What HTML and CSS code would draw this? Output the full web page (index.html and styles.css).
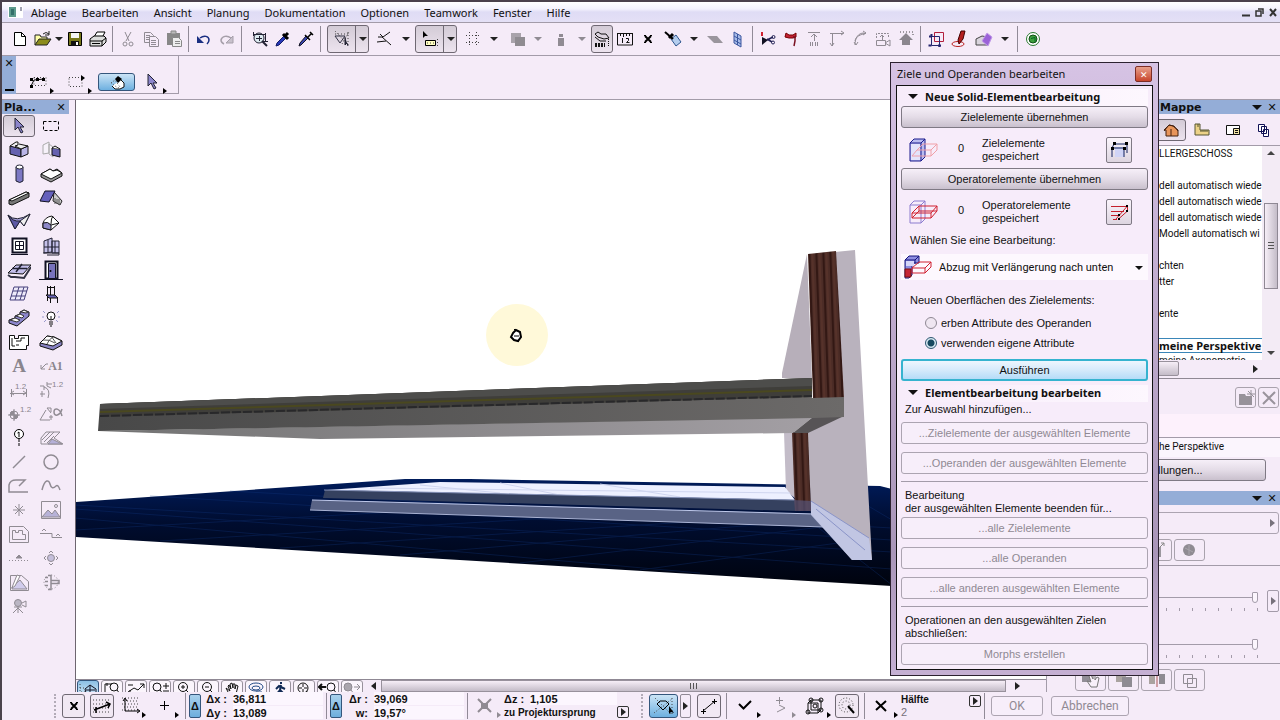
FILE: index.html
```html
<!DOCTYPE html>
<html lang="de">
<head>
  <meta charset="utf-8">
  <title>Ziele und Operanden bearbeiten</title>
  <link rel="stylesheet" href="styles.css">
</head>
<body>
  <nav class="menubar">
    <svg class="app-icon" width="16" height="12"><path d="M0 0h15v12H0z" fill="#fff"/><path d="M1 1h7v10H1z" fill="#5d9a8c"/><path d="M3 3h3v6H3z" fill="#33706a"/><path d="M13 1v4" stroke="#446"/></svg>
    <a href="#">Ablage</a>
    <a href="#">Bearbeiten</a>
    <a href="#">Ansicht</a>
    <a href="#">Planung</a>
    <a href="#">Dokumentation</a>
    <a href="#">Optionen</a>
    <a href="#">Teamwork</a>
    <a href="#">Fenster</a>
    <a href="#">Hilfe</a>
    <svg class="window-buttons" width="38" height="12"><path d="M2 9.500h8" stroke="#333" stroke-width="2"/><path d="M16 5h5v5h-5zM18 3h5v5" fill="none" stroke="#333" stroke-width="1.500"/><path d="M30 3l6 7M36 3l-6 7" stroke="#333" stroke-width="2"/></svg>
  </nav>

  <div class="toolbar">
    <button class="tool"><svg width="20" height="20"><path d="M4.500 3.500h7l4 4v9h-11z" fill="#fff" stroke="#000"/><path d="M11.500 3.500v4h4" fill="none" stroke="#000"/></svg></button>
    <button class="tool"><svg width="20" height="20"><path d="M2 16V6h5l1 2h6v3" fill="#ffffa8" stroke="#222"/><path d="M2 16l4-6h12l-4 6z" fill="#8c8c1c" stroke="#222"/><path d="M10 5q3-3 6 0M16 2v4h-4" fill="none" stroke="#222"/></svg></button>
    <button class="drop"></button>
    <button class="tool"><svg width="20" height="20"><path d="M3.500 3.500h13v13h-13z" fill="#77771a" stroke="#000"/><path d="M6 4h8v5H6z" fill="#f5f5f5"/><path d="M6 12h8v5H6z" fill="#111"/><path d="M11 13h2v3h-2z" fill="#fff"/></svg></button>
    <button class="tool"><svg width="20" height="20"><path d="M6 8l3-5h8l-3 6" fill="#fff" stroke="#000"/><path d="M2 10l4-3h10l2 2v4l-4 4H2z" fill="#ddd" stroke="#000"/><path d="M2 12h12l4-3M14 12v5M4 14.500h8" fill="none" stroke="#000"/></svg></button>
    <span class="sep"></span>
    <button class="tool"><svg width="20" height="20" class="gray"><path d="M7 3l4 9M13 3L8 12"/><circle cx="7" cy="15" r="2"/><circle cx="13" cy="15" r="2"/></svg></button>
    <button class="tool"><svg width="20" height="20" class="gray"><path d="M3.500 3.500h6l3 3v7h-9zM5 6.500h4M5 8.500h5M5 10.500h5"/><path d="M8.500 7.500h6l3 3v7h-9z" fill="#f5ebf8"/><path d="M10 11.500h5M10 13.500h5M10 15.500h5"/></svg></button>
    <button class="tool"><svg width="20" height="20"><path d="M3 4h13v12H3z" fill="#888"/><path d="M7 2h5v3H7z" fill="#bbb" stroke="#888"/><path d="M8.500 8.500h6l3 3v6h-9z" fill="#eee" stroke="#888"/><path d="M11 12.500h5M11 14.500h5" stroke="#888"/></svg></button>
    <span class="sep"></span>
    <button class="tool"><svg width="20" height="20"><path d="M6 9c4-3 9-2 9 2 0 1-1 3-2 4" fill="none" stroke="#1a2f82" stroke-width="1.500"/><path d="M3 7v7h7z" fill="#1a2f82"/></svg></button>
    <button class="tool"><svg width="20" height="20"><path d="M14 9C10 6 5 7 4 11c0 1 1 3 3 4" fill="none" stroke="#a69faa" stroke-width="1.500"/><path d="M16 7v7H9z" fill="#c8c1cc" stroke="#a69faa"/></svg></button>
    <span class="sep sep-wide"></span>
    <button class="tool"><svg width="20" height="20"><circle cx="9" cy="9" r="5" fill="#dceaf0" stroke="#223"/><path d="M12 12l5 5" stroke="#223" stroke-width="2"/><path d="M3 5.500h13M3.500 3v4M15.500 4v8M13 12.500h5M6 9.500h6M9.500 7v5" stroke="#223"/></svg></button>
    <button class="tool"><svg width="20" height="20"><path d="M3 17l1-3 7-7 2 2-7 7z" fill="#2838b8" stroke="#111b66"/><path d="M10 5l5 5M12 7l3-3" stroke="#000" stroke-width="3"/></svg></button>
    <button class="tool"><svg width="20" height="20"><path d="M3 17l2-1 7-7-2-2-6 7z" fill="#3a46b0" stroke="#112"/><path d="M9 6l5 5M12 8l3-3M14 3l3 3" stroke="#000" stroke-width="1.500"/></svg></button>
    <span class="sep sep-wide"></span>

    <span class="pair pressed">
      <button><svg width="20" height="20"><path d="M3 5h14M3 2l14 15M10 15l7-12M16 3v13" class="dots"/><path d="M3 7h10l-5 7z" fill="none" stroke="#334"/><path d="M13 8v8l2-2 1 3" fill="#223" stroke="#223"/></svg></button>
      <button class="drop"></button>
    </span>
    <span class="pair">
      <button><svg width="20" height="20" class="line"><path d="M3 8h4l9 8M5 5l3 3 7-5M2 13l9-1"/></svg></button>
      <button class="drop"></button>
    </span>
    <span class="pair pressed">
      <button><svg width="20" height="20"><path d="M3 2v7l2-2h3z"/><path d="M5.500 11.500h10v5h-10z" fill="#ffffc0" stroke="#000"/><path d="M7 14h7" class="dots"/><path d="M17.500 10v8" class="dots"/></svg></button>
      <button class="drop"></button>
    </span>
    <span class="pair">
      <button><svg width="20" height="20"><path d="M3 6.500h14M3 13.500h14M6.500 3v14M13.500 3v14" class="dots"/></svg></button>
      <button class="drop"></button>
    </span>
    <span class="pair muted">
      <button><svg width="20" height="20"><path d="M4 4h10v10H4z" fill="#a9a3ab"/><path d="M8 8h10v9H8z" fill="#8f8b91"/></svg></button>
      <button class="drop"></button>
    </span>
    <span class="pair muted">
      <button><svg width="20" height="20"><path d="M8 5h4v3h-4zM7 9h6v8H7z" fill="#908b93"/></svg></button>
      <button class="drop"></button>
    </span>
    <button class="tool pressed narrow"><svg width="20" height="20" class="line"><path d="M3 5l3-2 3 2h5l3 4-5 1-6-2zM3 8l5 4h6"/><path d="M3 15h10M3 17h10" stroke-width="2" stroke-dasharray="2 1"/><path d="M16.500 10v8" stroke-dasharray="1 1"/></svg></button>
    <button class="tool"><svg width="20" height="20" class="line"><path d="M2 4.500h16M2.500 4v12h15V4M5.500 5v2M8.500 5v3M11.500 5v2M14.500 5v2M7.500 9v5M11 9.500h2.500v2l-2 2h3"/></svg></button>
    <button class="tool"><svg width="20" height="20"><path d="M7 7l6 6M13 7l-6 6" stroke="#000" stroke-width="2"/><path d="M6 6.500h2M12 6.500h2M6 13.500h2M12 13.500h2" stroke="#000"/></svg></button>
    <span class="pair">
      <button><svg width="20" height="20"><path d="M8 10l5-4 5 7-5 4z" fill="#b4cdee" stroke="#2d558e"/><path d="M2 3l8 7" stroke="#000" stroke-width="2"/><path d="M6 9l4-4" stroke="#000" stroke-width="3"/></svg></button>
      <button class="drop"></button>
    </span>
    <button class="tool"><svg width="20" height="20"><path d="M2 7h10l6 7H9z" fill="#9a959d"/></svg></button>
    <button class="tool"><svg width="20" height="20"><path d="M6 3l7 4v11l-7-4z" fill="#a8bce8" stroke="#3c57a0"/><path d="M6 7l7 4M6 11l7 4M9.500 5v11" stroke="#3c57a0"/></svg></button>
    <span class="sep"></span>
    <button class="tool"><svg width="20" height="20"><path d="M4 3v4" stroke="#d02030" stroke-width="2"/><path d="M4 8v8l6-5z" fill="#112"/><path d="M9 11l6-3M9 10l5 3" stroke="#225" stroke-width="1.500"/><circle cx="15.500" cy="8" r="1.500" fill="none" stroke="#225"/><circle cx="15" cy="13.500" r="1.500" fill="none" stroke="#225"/></svg></button>
    <button class="tool"><svg width="20" height="20"><path d="M4 8l1-4 3 2h4l3-2v4l-3 1H8z" fill="#c32235" stroke="#700"/><path d="M12 8h2v4l-1 5" fill="none" stroke="#7a1020" stroke-width="1.500"/></svg></button>
    <button class="tool"><svg width="20" height="20" class="gray"><path d="M4 3.500h12M10.500 5v7M7 8l3-3 3 3M6.500 13v4M8.500 13v4M11.500 13v4M13.500 13v4"/></svg></button>
    <button class="tool"><svg width="20" height="20" class="gray"><path d="M3 4.500h13M5.500 17V4M14 2l3 2-3 2M3 14l2 3 2-3"/></svg></button>
    <button class="tool"><svg width="20" height="20" class="gray"><path d="M5 16C5 9 8 4 14 4M4 13l2 3 2-3M13 2l3 2-3 2M5 12C6 7 10 6 16 4"/></svg></button>
    <button class="tool"><svg width="20" height="20" class="gray"><path d="M3.500 11.500h9v5h-9zM12 14l5-3v6z"/><path d="M3.500 9V4.500h12V9" stroke-dasharray="2 1"/><path d="M9.500 11V6M7 8l2-2 2 2"/></svg></button>
    <button class="tool"><svg width="20" height="20"><path d="M4 3h13v4" class="dots"/><path d="M10 4l7 7h-3v5H6v-5H3z" fill="#8b868e"/></svg></button>
    <span class="sep"></span>
    <button class="tool"><svg width="20" height="20" fill="none"><path d="M8.500 3.500h9v9h-9z" stroke="#b31f3c"/><path d="M5.500 7.500h8v9h-8z" stroke="#26266e"/><path d="M3 7.500h3M5.500 5v3M12 16.500h3M5.500 16.500h-3M13.500 16v2" stroke="#26266e" stroke-width="2"/></svg></button>
    <button class="tool"><svg width="20" height="20"><ellipse cx="9" cy="15" rx="6" ry="2.500" fill="none" stroke="#b22"/><path d="M12 2h4l-2 8-4 5-1-4z" fill="#b31f1f" stroke="#400"/></svg></button>
    <span class="pair">
      <button><svg width="20" height="20"><path d="M2 16v-6l6-3 6 1v8z" fill="#d9d4dd" stroke="#444"/><path d="M8 12l5-8 5 4-4 9z" fill="#9b62d8" stroke="#c19be8"/></svg></button>
      <button class="drop"></button>
    </span>
    <span class="sep"></span>
    <button class="tool"><svg width="20" height="20"><circle cx="10" cy="10" r="6.500" fill="#fff" stroke="#2a7a30"/><circle cx="10" cy="10" r="4" fill="#3e9f3e" stroke="#114d16"/><path d="M8 9.500l4-1v4" fill="none" stroke="#062"/></svg></button>
  </div>

  <div class="infobar">
    <div class="grip-box"><button class="close">✕</button><i></i></div>
    <div class="info-tools">
      <button class="flyout"><svg width="22" height="16"><path d="M6 3.500h12v8H6z" class="dots"/><path d="M3 12l3-6 10-1" fill="none" stroke="#000"/><path d="M2 4h3v3H2zM14 4h3v3h-3zM2 11h3v3H2zM8 4h3v3H8z"/></svg></button>
      <button class="flyout"><svg width="22" height="16"><path d="M3 3.500h13v9H3z" class="dots"/><path d="M15 1l4 3-4 3z"/></svg></button>
      <button class="blue-btn"><svg width="20" height="16"><path d="M14 6l3 3v4l-4 2H8l-3-3" fill="#fff" stroke="#111"/><path d="M11 2l4 3-4 4-3-4z"/><path d="M4 9l4-3 5 7-2 1z" class="dots"/></svg></button>
      <button class="flyout"><svg width="22" height="20"><path d="M7 2v12l3-3 3 6 2-1-3-5h4z" fill="#8c86cc" stroke="#223"/></svg></button>
    </div>
  </div>

  <div class="workspace">
    <aside class="palette">
      <div class="panel-title"><b>Pla...</b><button class="close">✕</button></div>
      <div class="palette-grid">
        <button class="pressed"><svg width="24" height="20"><path d="M8 2v12l3-3 3 6 2-1-3-5h4z" fill="#8c86cc" stroke="#223"/></svg></button>
        <button><svg width="24" height="20"><path d="M4.500 5.500h15v9h-15z" fill="none" stroke="#000" stroke-dasharray="3 2"/></svg></button>
        <button><svg width="24" height="20"><path d="M3 6l11 3v8L3 14z" fill="#6662b0" stroke="#111"/><path d="M14 9l7-3v8l-7 3z" fill="#b9b4e6" stroke="#111"/><path d="M3 6l6-4h2v3l-3 1 6 3 7-3-9-2" fill="#eee" stroke="#111"/></svg></button>
        <button><svg width="24" height="20"><path d="M4 5l6-3v11l-6 1zM10 4l4 3v10l-4-3z" fill="#f7f2fa" stroke="#aaa"/><path d="M13 8l8 1v8l-8-2z" fill="#6662b0" stroke="#111"/><path d="M13 8l3-2 5 3" fill="#eee" stroke="#111"/></svg></button>
        <button><svg width="24" height="20"><path d="M9 3v14q4 3 7 0V3" fill="#7d78c4" stroke="#223"/><ellipse cx="12.500" cy="3" rx="3.500" ry="2" fill="#fff" stroke="#223"/></svg></button>
        <button><svg width="24" height="20"><path d="M2 10l9-5 3 2 4-2 5 4v3l-11 6-10-5z" fill="#999" stroke="#111"/><path d="M2 10l9-5 3 2 4-1 5 3-11 6z" fill="#fff" stroke="#111"/></svg></button>
        <button><svg width="24" height="20"><path d="M2 12l17-8 3 1v4L5 17l-3-1z" fill="#777" stroke="#111"/><path d="M2 12l17-8 3 1-17 8z" fill="#fff" stroke="#111"/></svg></button>
        <button><svg width="24" height="20"><path d="M15 4l8 9-2 4-7-4z" fill="#ccc" stroke="#222"/><path d="M6 3h10l-6 11-9-1z" fill="#6560bb" stroke="#112"/><path d="M16 10v6M18 11v5M20 11v6" stroke="#555"/></svg></button>
        <button><svg width="24" height="20"><path d="M1 3q8 8 22-1l-6 12-4-5-5 8z" fill="#a29dd8" stroke="#223"/><path d="M1 3q5 7 12 6l-5 8z" fill="#5e59a5" stroke="#223"/><path d="M13 9l10-7-6 12z" fill="#eee" stroke="#223"/></svg></button>
        <button><svg width="24" height="20"><path d="M4 11q2-6 9-7l7 7-8 7-8-2z" fill="#fff" stroke="#111"/><path d="M4 11q5-2 8 2v5l-8-2z" fill="#8d88c8" stroke="#111"/><path d="M12 12q0-6 2-8M12 13l8-2" fill="none" stroke="#111"/></svg></button>
        <button><svg width="24" height="20"><path d="M5.500 2.500h14v14h-14z" fill="#fff" stroke="#112" stroke-width="2"/><path d="M8.500 5.500h8v8h-8z" fill="#fff" stroke="#112"/><path d="M12.500 5v9M8 9.500h8M4 18.500h17" stroke="#112"/></svg></button>
        <button><svg width="24" height="20"><path d="M5 5l8-3v14l-8 1zM13 5h7v12h-7z" fill="#c4c0ea" stroke="#223"/><path d="M5 11h15M9 4v13M16 5v12M4 17h16v2H8" fill="none" stroke="#223"/></svg></button>
        <button><svg width="24" height="20"><path d="M1 13l8-8h15l-8 9z" fill="#c3beea" stroke="#111"/><path d="M1 15l3 2h4l9 1 7-11" fill="none" stroke="#334" stroke-width="2"/><path d="M5 8.500h15M9 12l6-8" stroke="#223" stroke-width="1.500"/></svg></button>
        <button><svg width="24" height="20"><path d="M6.500 1.500h12v17h-12z" fill="#fff" stroke="#112" stroke-width="2"/><path d="M9.500 3.500h7v15h-7z" fill="#7772bd" stroke="#112"/><circle cx="11.500" cy="11" r="1"/><path d="M0 19.500h24" stroke="#112"/></svg></button>
        <button><svg width="24" height="20"><path d="M7 3h14l-4 13H3zM12 3L8 16M17 3l-4 13M6 7h14M4 12h14" fill="#eeeafa" stroke="#47407c"/></svg></button>
        <button><svg width="24" height="20"><path d="M8.500 2v9M11.500 2v9M15.500 2v9M8 3.500h8" fill="none" stroke="#111"/><path d="M7 11h9l3 3h-9z" fill="#6a66b8" stroke="#111"/><path d="M8.500 12v5M11.500 14v5M18.500 14v5" stroke="#111"/></svg></button>
        <button><svg width="24" height="20"><path d="M2 12l6-2V8l5-2V4l4-2 5 2v4l-12 10-8-3z" fill="#8c86cc" stroke="#111"/><path d="M3 12l7 2 3-2-5-2zM9 8l6 2 2-2-4-2zM14 4l5 1 2-1-4-2z" fill="#fff" stroke="#333"/></svg></button>
        <button><svg width="24" height="20"><circle cx="12" cy="8" r="4" fill="#fff" stroke="#111"/><path d="M12 8v4M10 14h4M10 16h4M11 18h2" stroke="#111"/><path d="M4 3l2 2M20 3l-2 2M3 9h2M19 9h2M5 14l2-2M19 14l-2-2" stroke="#99c"/></svg></button>
        <button><svg width="24" height="20"><path d="M2.500 3.500h5v3h4v-3h10v10h-2v4h-17z" fill="#fff" stroke="#111"/><path d="M5 6v8h3M9 9h5V6h4M9 13h3" fill="none" stroke="#111"/></svg></button>
        <button><svg width="24" height="20"><path d="M1 11l7-7 7 1 8 4v4l-9 5-13-4z" fill="#8883c4" stroke="#111"/><path d="M1 11l7-7 7 1 8 4-9 5z" fill="#fff" stroke="#111"/><path d="M4 8q6-1 12 3M8 12q2-5 6-7M12 4l5 7" fill="none" stroke="#555"/></svg></button>
        <button class="glyph">A</button>
        <button class="glyph small"><svg width="9" height="20" class="gray"><path d="M2 9v4h4M2 13l5-5h3"/></svg>A1</button>
        <button><svg width="24" height="20" class="gray"><path d="M3 13.500h17M4.500 9v8M19.500 9v8M7 11l-3 2 3 2M16 11l3 2-3 2"/><text x="8" y="9">1.2</text></svg></button>
        <button><svg width="26" height="20" class="gray"><path d="M2 6h4v4M2 14h5M4 11v6M6 7q7 2 4 11M9 4h5M9 2v4l4 2"/><text x="14" y="7">1.2</text></svg></button>
        <button><svg width="26" height="20" class="gray"><circle cx="8" cy="11" r="4"/><path d="M8 7v4h4q0 4-4 4v-4H4q0-4 4-4" fill="#908b93"/><path d="M8 5v12M2 11h12"/><text x="14" y="8">1.2</text></svg></button>
        <button><svg width="26" height="20" class="gray"><path d="M8 6L2 16h10M9 4h4v4M9 4l4 5M11 13h4M13 11v5"/><path d="M24 5c-2 7-8 8-8 3s6-4 8 4" stroke-width="1.500"/></svg></button>
        <button><svg width="24" height="20"><circle cx="12" cy="6" r="4.500" fill="#fff" stroke="#000"/><path d="M10.500 5l1.500-1v5" fill="none" stroke="#000"/><path d="M12 11v7" stroke="#000" stroke-dasharray="3 1"/></svg></button>
        <button><svg width="24" height="20" class="gray"><path d="M2 16V10l5-6h14l-6 6 9 6z"/><path d="M3 12l8-8M5 14L15 4M8 15l7-7"/><path d="M13 11l10 5h-14z" fill="#b5b0d8"/></svg></button>
        <button><svg width="24" height="20" class="gray"><path d="M6 16L18 4" stroke-width="1.500"/></svg></button>
        <button><svg width="24" height="20" class="gray"><circle cx="12" cy="10" r="7" stroke-width="1.500"/></svg></button>
        <button><svg width="24" height="20" class="gray"><path d="M21 16H2V9q1-5 7-5h9l-6 6" stroke-width="1.500"/></svg></button>
        <button><svg width="24" height="20" class="gray"><path d="M3 14C6 2 10 4 11 8s3 5 6 2q2-2 4 4" stroke-width="1.500"/></svg></button>
        <button><svg width="24" height="20" class="gray"><path d="M12 4v12M6 10h12M8 6l8 8M16 6l-8 8"/></svg></button>
        <button><svg width="24" height="20" class="gray"><path d="M2.500 1.500h19v17h-19z"/><path d="M3 17l6-7 4 4 3-4 5 7z" fill="#b7b2d8"/><circle cx="17" cy="6" r="1.500"/></svg></button>
        <button><svg width="24" height="20" class="gray"><path d="M2.500 2.500h14l5 5v11h-19z"/><path d="M5.500 6.500h3v2h3v-2h4v4h3v5h-13z"/></svg></button>
        <button><svg width="24" height="20" class="gray"><path d="M1 9.500h12v4h10M3 7l2-2 2 2M17 12l2-2 2 2"/></svg></button>
        <button><svg width="24" height="20" class="gray"><path d="M9 10l3-3 3 3z" fill="#908b93"/><path d="M2 12.500h20" stroke-dasharray="1 2"/></svg></button>
        <button><svg width="24" height="20" class="gray"><circle cx="12" cy="10" r="3.500" fill="#c5bfdb"/><path d="M10 5l2-2 2 2M10 15l2 2 2-2M7 8l-2 2 2 2M17 8l2 2-2 2"/></svg></button>
        <button><svg width="24" height="20" class="gray"><path d="M3.500 3.500h11l7 6v9h-18z"/><path d="M5 15l8-7 7 9H5z" fill="#d1ccec"/><path d="M6 13L10 3l3 1-5 10-3 2z" fill="#fff"/></svg></button>
        <button><svg width="24" height="20" class="gray"><circle cx="12" cy="10" r="7" stroke-dasharray="1 2"/><path d="M9 3.500h3v14H9M12 8.500h8v3h-8M6 5.500h3M6 9.500h3M6 13.500h3" stroke-width="1.500"/></svg></button>
        <button><svg width="24" height="20" class="gray"><circle cx="11" cy="7" r="3.500" fill="#bbb6c4"/><path d="M15 7l4-2v6l-4-2M11 11v6M6 17l5-5 5 5M7 11h8"/></svg></button>
      </div>
    </aside>

    <main class="view">
      <div class="scene">
        <svg width="100%" height="100%">
          <defs>
            <linearGradient id="ground" x1="0" y1="0" x2="0" y2="1"><stop offset="0" stop-color="#001c5c"/><stop offset=".4" stop-color="#000d30"/><stop offset="1" stop-color="#00030d"/></linearGradient>
            <linearGradient id="under" x1="0" y1="0" x2="1" y2="0"><stop offset="0" stop-color="#727272"/><stop offset="1" stop-color="#a39fa4"/></linearGradient>
            <linearGradient id="front" x1="0" y1="0" x2="1" y2="0"><stop offset="0" stop-color="#484848"/><stop offset="1" stop-color="#6c6a69"/></linearGradient>
            <pattern id="wood" width="7" height="40" patternUnits="userSpaceOnUse" patternTransform="rotate(-2)"><path d="M0 0h7v40H0z" fill="#4c2c26"/><path d="M2 0v40" stroke="#331814" stroke-width="2"/><path d="M5 0v40" stroke="#5f382e"/></pattern>
          </defs>
          <g transform="translate(-76 -100)">
            <path d="M75 502L405 479 470 479 880 486 892 489V586L75 537z" fill="url(#ground)"/>
            <g stroke="#133a86" stroke-width="1" opacity=".3" fill="none">
              <path d="M75 509L892 569M75 518L700 573M75 505L892 552M150 496L892 540M230 491L892 528"/>
              <path d="M75 530L500 506M160 541L620 514M280 548L720 520M400 555L790 522M520 563L830 526M640 570L860 540"/>
              <path d="M836 487L892 520M815 525L892 585"/>
            </g>
            <path d="M784 432L808 432 811 511 786 491z" fill="#c3bcc8"/>
            <path d="M327 490L440 482 785 487 795 500z" fill="#edf0ff"/>
            <path d="M370 488L790 493M500 483L560 495M600 484L680 497M420 485L500 493" stroke="#cfd5ef" fill="none"/>
            <path d="M325 490L795 500V511L323 498z" fill="#35415f"/>
            <path d="M324 490L795 500" stroke="#8793b8"/>
            <path d="M312 500L815 514 825 527 310 510z" fill="#596385"/>
            <path d="M312 500L815 514" stroke="#bfc9eb"/>
            <path d="M310 510L825 527" stroke="#aab3d4"/>
            <path d="M807 254L782 373V378L812 379z" fill="#b7afba"/>
            <path d="M835 252L855 250 872 560 852 560 811 514 808 432 843 400z" fill="#b9b2bd"/>
            <path d="M811 501L869 538 872 560 852 560 811 515z" fill="#c3cbec" opacity=".8"/>
            <path d="M811 501L869 538M816 509L865 550" stroke="#8a94c8"/>
            <path d="M808 254L836 251 844 398 813 398z" fill="url(#wood)"/>
            <path d="M792 432L808 432 811 511 795 511z" fill="url(#wood)"/>
            <path d="M794 500L811 501V511H795z" fill="#555278" opacity=".7"/>
            <path d="M98 431L813 417 793 433 320 439z" fill="url(#under)"/>
            <path d="M813 417L844 416 808 433H793z" fill="#575456"/>
            <path d="M100 404L812 378V398L844 397V417L813 418 98 431z" fill="url(#front)"/>
            <path d="M100 404L812 378V397L100 417z" fill="#3f3e3a"/>
            <path d="M100 404L812 378V386L100 409z" fill="#4d4d4b"/>
            <path d="M100 412L812 390" stroke="#4a481f" stroke-width="2"/>
            <path d="M100 416L812 396" stroke="#28282a" stroke-width="2" stroke-dasharray="9 2"/>
            <circle cx="517" cy="335" r="31" fill="#fff9d9"/>
            <path d="M513 333l3-3 4 2 1 5-3 4-4-1-3-3zM515 330v-1M518 341v1" fill="#fff" stroke="#000" stroke-width="2"/>
            <path d="M514 336h5" stroke="#000"/>
          </g>
        </svg>
      </div>
      <div class="view-nav">
        <button class="on"><svg width="20" height="14"><path d="M2 3v8h6M2 7h5" class="dots"/><path d="M7 8l5-4 6 4v4H8zM12 4v8M8 9h9" fill="none" stroke="#112"/></svg></button>
        <button><svg width="20" height="14" class="line"><path d="M3 12V3h7M5 2v3"/><circle cx="12" cy="6" r="4"/><path d="M15 9l3 4"/></svg></button>
        <button><svg width="20" height="14" class="line"><path d="M2 4h5M2 11l6-4 4 2 6-6M14 3h4v4M4 9v4"/></svg></button>
        <button><svg width="20" height="14" class="line"><circle cx="7" cy="6" r="4"/><path d="M10 9l3 4M13 5h6M16 2v6M13 10h6"/></svg></button>
        <button><svg width="20" height="14" class="line"><circle cx="9" cy="6" r="4.500"/><path d="M12 9l4 4M7 6h4M9 4v4"/></svg></button>
        <button><svg width="20" height="14" class="line"><circle cx="9" cy="6" r="4.500"/><path d="M12 9l4 4M7 6h4"/></svg></button>
        <button><svg width="20" height="14" class="line"><path d="M4 7l3 6h7l2-8-2-1-1 4V3h-2v4L10 2 8 3l1 5-2-4-1 1 2 5z"/></svg></button>
        <button><svg width="20" height="14" fill="none" stroke="#234a86"><ellipse cx="10" cy="6" rx="7" ry="4"/><ellipse cx="10" cy="7" rx="4" ry="2"/><path d="M10 11h6"/></svg></button>
        <button><svg width="20" height="14" fill="none" stroke="#112a55" stroke-width="2"><path d="M11 1v2M11 4l-1 5-4 5M10 9l4 4M6 8l3-3 6 3"/></svg></button>
        <button><svg width="20" height="14" class="line"><circle cx="9" cy="7" r="5"/><path d="M9 3v3M9 8v3M5 7h3M10 7h3M12 10l4 3"/></svg></button>
        <button><svg width="20" height="14" class="line"><circle cx="13" cy="6" r="4"/><path d="M16 9l3 4"/><path d="M1 6h7M4 3L1 6l3 3" stroke-width="2"/></svg></button>
        <button><svg width="20" height="14" class="gray"><circle cx="6" cy="6" r="4" fill="#aaa5ad"/><path d="M9 9l3 4M12 6h6M15 3l3 3-3 3"/></svg></button>
        <button class="arrow left"></button>
        <div class="h-thumb"><svg width="10" height="8"><path d="M1.500 1v6M4.500 1v6M7.500 1v6" stroke="#555"/></svg></div>
        <button class="arrow"></button>
      </div>
    </main>

    <aside class="dock">
      <div class="panel-title"><b class="cut">Mappe</b><i class="caret"></i><button class="close">✕</button></div>
      <div class="tabs">
        <button class="pressed"><svg width="20" height="18"><path d="M3 9l5-5 4 1 5 4v6H5V9z" fill="#e8955a" stroke="#421"/><path d="M8 4l-5 6M10 8v7M8 4l5 1 4 5" fill="none" stroke="#421"/></svg></button>
        <button><svg width="20" height="18"><path d="M3 3h5v6h9v5H3z" fill="#ecd287" stroke="#553"/><path d="M6 3v3M8 10h8" stroke="#553"/></svg></button>
        <button><svg width="20" height="18"><path d="M3.500 4.500h13v9h-13z" fill="#fff" stroke="#111"/><path d="M10.500 7.500h6v6h-6z" fill="#f2e4a5" stroke="#111"/><path d="M12 9.500h3M12 11.500h3" stroke="#111"/></svg></button>
        <button><svg width="20" height="18"><path d="M4.500 3.500h6v7h-6zM7.500 5.500h5v7h-5zM9.500 8.500h5v7h-5z" fill="#fff" stroke="#115"/></svg></button>
      </div>
      <div class="tree-box">
        <ul class="tree">
          <li>LLERGESCHOSS</li>
          <li></li>
          <li>dell automatisch wiede</li>
          <li>dell automatisch wiede</li>
          <li>dell automatisch wiede</li>
          <li>Modell automatisch wi</li>
          <li></li>
          <li>chten</li>
          <li>tter</li>
          <li></li>
          <li>ente</li>
          <li></li>
          <li class="current">meine Perspektive</li>
          <li>meine Axonometrie</li>
        </ul>
        <div class="v-scroll"><i class="up"></i><div class="v-thumb"><svg width="8" height="10"><path d="M1 1.500h6M1 4.500h6M1 7.500h6" stroke="#555"/></svg></div><i class="down"></i></div>
      </div>
      <div class="tree-hscroll"><div class="tree-hthumb"></div><button class="arrow"></button></div>
      <div class="dock-actions">
        <button disabled><svg width="18" height="18"><path d="M2 5h6l1 2h6v9H2z" fill="#97929a"/><path d="M14 1v8M10 5h8M11 2l6 6" stroke="#97929a"/></svg></button>
        <button disabled><svg width="18" height="18"><path d="M3 3l12 12M15 3L3 15" stroke="#99939c" stroke-width="2"/></svg></button>
      </div>
      <div class="props">
        <div class="props-head"></div>
        <div class="props-row">he Perspektive</div>
        <button class="push settings">llungen...</button>
      </div>
      <div class="panel-title second"><i class="caret"></i><button class="close">✕</button></div>
      <div class="field-box"><button class="arrow"></button></div>
      <div class="quad">
        <button disabled><svg width="20" height="18"><path d="M8 6h6v10H8z" fill="#9b979e"/><path d="M13 6l4-4h-3M17 2v3" fill="none" stroke="#888"/></svg></button>
        <button disabled><svg width="20" height="18"><circle cx="9" cy="9" r="6" fill="#8f8b92"/><path d="M9 4v10M5 7l8 4" stroke="#a9a5ac"/></svg></button>
      </div>
      <div class="slider-row first">
        <div><input type="range" aria-label="Ursprung" value="100" disabled><div class="ticks"></div></div>
        <button class="arrow"></button>
      </div>
      <div class="slider-row">
        <div><input type="range" aria-label="Kopie" value="100" disabled><div class="ticks"></div></div>
      </div>
      <div class="quad last">
        <button disabled><svg width="20" height="18"><path d="M1 4h8v7H1z" fill="#918d96"/><path d="M6 10l4 6h6l2-9-2-1-2 3V4h-2v4l-2-4-2 1 2 6z" fill="#f8f0fa" stroke="#777"/></svg></button>
        <button disabled><svg width="20" height="18"><path d="M2 2h10v9H2z" fill="#aaa3a0"/><path d="M8 6h10v10H8z" fill="#8f8b93"/></svg></button>
        <button disabled><svg width="20" height="18"><path d="M2 3h6v10H2z" fill="#aaa3a0"/><path d="M12 3h6v10h-6z" fill="#8f8b93"/><path d="M10 2v14" stroke="#a55"/></svg></button>
        <button disabled><svg width="20" height="18" class="gray"><path d="M3.500 3.500h9v9h-9zM7.500 7.500h9v9h-9z"/></svg></button>
      </div>
    </aside>
  </div>

  <footer class="status">
    <i class="dots-grip"></i>
    <button class="raised w-22"><svg width="20" height="20"><path d="M7 7l6 6M13 7l-6 6" stroke="#000" stroke-width="2"/><path d="M6 6.500h2M12 6.500h2M6 13.500h2M12 13.500h2" stroke="#000"/></svg></button>
    <button class="raised w-24"><svg width="22" height="20"><path d="M2 4h18M2 8h18M2 12h18M2 16h18" class="dots"/><path d="M3 14l16-6M5 11v6M15 6l4 2-2 4" fill="none" stroke="#000" stroke-width="1.500"/></svg></button>
    <button class="flyout"><svg width="22" height="20"><path d="M2 2h16M4 5h14M2 8h16M4 11h14M2 14h16" class="dots"/><path d="M5 3v12h14M3 5l2-3 2 3M17 13l3 2-3 2" fill="none" stroke="#000"/></svg></button>
    <button class="flyout"><svg width="22" height="20"><path d="M11.500 5v9M7 9.500h9" stroke="#000"/></svg></button>
    <span class="sep"></span>
    <button class="delta">Δ</button>
    <div class="coords">
      <label for="dx">Δx :</label><input id="dx" value="36,811">
      <label for="dy">Δy :</label><input id="dy" value="13,089">
    </div>
    <span class="sep"></span>
    <button class="delta">Δ</button>
    <div class="coords">
      <label for="dr">Δr :</label><input id="dr" value="39,069">
      <label for="dw">w:</label><input id="dw" value="19,57°">
    </div>
    <span class="sep"></span>
    <button class="flyout muted"><svg width="22" height="20"><path d="M3 3l13 13M16 3L3 16" stroke="#8f8a92" stroke-width="2"/><path d="M6 7h7v6H6z" fill="#8f8a92"/></svg></button>
    <div class="z-box">
      <label for="dz">Δz :</label><input id="dz" value="1,105">
      <span>zu Projektursprung</span><button class="arrow"></button>
    </div>
    <i class="dots-grip"></i>
    <button class="blue-btn tall"><svg width="24" height="20"><path d="M3 2l16 16M20 2v16M2 17L20 3" class="dots"/><path d="M5 8l3-3h6l3 3-6 6z" fill="none" stroke="#000"/><path d="M17 10v8l2-2 3 1z"/></svg></button>
    <button class="arrow slim"></button>
    <button class="raised w-24"><svg width="20" height="20"><path d="M4 15L16 5M2 15.500h5M4.500 13v5M13 5.500h5M15.500 3v5" stroke="#000"/></svg></button>
    <span class="sep"></span>
    <button class="flyout wide"><svg width="22" height="20"><path d="M4 8l5 5M16 5l-8 8" fill="none" stroke="#000" stroke-width="2"/></svg></button>
    <button class="flyout wide muted"><svg width="22" height="20" class="gray"><path d="M6 4.500h7M9.500 1v7M7 16l8-4-6-3"/></svg></button>
    <button class="flyout wide"><svg width="22" height="20" class="line"><path d="M6 4h10v10H6zM3 7h10v10H3zM3 7l3-3M13 17l3-3"/><circle cx="6" cy="4" r="2"/><circle cx="16" cy="4" r="2"/><circle cx="3" cy="16" r="2"/><circle cx="16" cy="14" r="2"/><circle cx="10" cy="10" r="2"/></svg></button>
    <button class="raised w-24"><svg width="20" height="20"><circle cx="9" cy="9" r="7" class="dots"/><circle cx="9" cy="9" r="4" class="dots"/><path d="M11 10l6 7" stroke="#000" stroke-width="2"/></svg></button>
    <span class="sep"></span>
    <button class="flyout"><svg width="22" height="20"><path d="M4 5l10 10M14 5L4 14" stroke="#000" stroke-width="2"/></svg></button>
    <div class="half"><span><b>Hälfte</b><br>2</span><button class="arrow"></button></div>
    <span class="sep"></span>
    <button class="push ok" disabled>OK</button>
    <button class="push cancel" disabled>Abbrechen</button>
  </footer>

  <section class="dialog">
    <div class="dialog-title"><span>Ziele und Operanden bearbeiten</span><button class="dialog-close">✕</button></div>
    <form class="dialog-body">
      <h2><i class="caret"></i>Neue Solid-Elementbearbeitung</h2>
      <button type="button" class="push">Zielelemente übernehmen</button>
      <div class="stored">
        <svg width="30" height="26"><path d="M2 6l4-4h11v18l-4 4H2z" fill="#b9bcf0" stroke="#1b1b8c"/><path d="M3 7h9v16H3z" fill="#e3e4fb"/><path d="M2 6h11v18M13 6l4-4" fill="none" stroke="#1b1b8c"/><path d="M4 19l5-6h14l6-6v6l-6 6zM9 13l6-6h14M23 13v6" fill="none" stroke="#f0a0a8"/></svg>
        <span class="count">0</span><span class="what">Zielelemente gespeichert</span>
        <button type="button"><svg width="20" height="20"><path d="M6 7h9v10H6z" fill="#d0d4f6"/><path d="M5 4h13M3 8h12M5 4L3 8v9M15 8v9M18 4v9" fill="none" stroke="#11205c"/><path d="M2 7h3v3H2zM16 2h3v3h-3zM4 2h3v3H4zM14 7h3v3h-3z"/></svg></button>
      </div>
      <button type="button" class="push">Operatorelemente übernehmen</button>
      <div class="stored">
        <svg width="30" height="26"><path d="M2 6l4-4h11v18l-4 4H2zM2 6h11v18M13 6l4-4" fill="none" stroke="#8c7ccf"/><path d="M4 19v-5l7-7h18v5l-6 7zM4 14h19l6-7M23 14v5M11 7v5h18M11 12l-7 7" fill="none" stroke="#d02030"/></svg>
        <span class="count">0</span><span class="what">Operatorelemente gespeichert</span>
        <button type="button"><svg width="20" height="20" fill="none" stroke="#c5202c"><path d="M2 4.500h16L7 17M2 9.500h13M2 13.500h9M4 17.500h4M18.500 4v5l-9 8"/><path d="M17 3h2v2h-2zM9 12h2v2H9zM9 16h2v2H9zM17 8h2v2h-2z" fill="#000" stroke="none"/></svg></button>
      </div>
      <label class="choose" for="operation">Wählen Sie eine Bearbeitung:</label>
      <div class="select-row">
        <svg width="30" height="26"><path d="M2 6l4-4h10v7H9v12l-3 3H2z" fill="#8d8ee0" stroke="#14147c"/><path d="M3 7h8v5H3z" fill="#d5d6f8"/><path d="M2 6h10l4-4M12 6v4" fill="none" stroke="#14147c"/><path d="M2 15h6v8H2z" fill="#c62536" stroke="#711"/><path d="M9 14l7-6h12v5l-6 6H9zM9 14h13l6-6M22 14v5" fill="none" stroke="#d02030"/></svg>
        <select id="operation"><option>Abzug mit Verlängerung nach unten</option></select>
      </div>
      <p class="surface">Neuen Oberflächen des Zielelements:</p>
      <div class="radio"><input type="radio" name="attr" id="inherit"><label for="inherit">erben Attribute des Operanden</label></div>
      <div class="radio"><input type="radio" name="attr" id="own" checked><label for="own">verwenden eigene Attribute</label></div>
      <button type="button" class="push primary">Ausführen</button>
      <h2><i class="caret"></i>Elementbearbeitung bearbeiten</h2>
      <p class="add">Zur Auswahl hinzufügen...</p>
      <div class="stack">
        <button type="button" class="push" disabled>...Zielelemente der ausgewählten Elemente</button>
        <button type="button" class="push" disabled>...Operanden der ausgewählten Elemente</button>
      </div>
      <hr>
      <p>Bearbeitung<br>der ausgewählten Elemente beenden für...</p>
      <div class="stack">
        <button type="button" class="push" disabled>...alle Zielelemente</button>
        <button type="button" class="push" disabled>...alle Operanden</button>
        <button type="button" class="push" disabled>...alle anderen ausgewählten Elemente</button>
      </div>
      <hr>
      <p>Operationen an den ausgewählten Zielen abschließen:</p>
      <button type="button" class="push" disabled>Morphs erstellen</button>
    </form>
  </section>
</body>
</html>
```

FILE: styles.css
```css
* {
  box-sizing: border-box;
}
body {
  margin: 0;
  height: 100vh;
  display: flex;
  flex-direction: column;
  position: relative;
  overflow: hidden;
  background-color: #f5ebf8;
  border-left: 2px solid #4b424c;
  font-family: "Noto Sans", sans-serif;
  font-size: 11px;
  color: #111;
}
button, input, select {
  font-family: inherit;
  font-size: inherit;
  color: inherit;
  margin: 0;
  padding: 0;
}
button {
  display: flex;
  align-items: center;
  justify-content: center;
  background: none;
  border: none;
  flex-shrink: 0;
}
svg {
  display: block;
  flex-shrink: 0;
}
.gray {
  fill: none;
  stroke: #908b93;
}
.gray text {
  fill: #8a858d;
  stroke: none;
  font: 8px "Liberation Sans", sans-serif;
}
.line {
  fill: none;
  stroke: #111;
}
.dots {
  fill: none;
  stroke: #444;
  stroke-dasharray: 1 2;
}
.pressed {
  background: linear-gradient(#d3cbd6, #ece3ee);
  border: 1px solid #6f6873;
  border-radius: 3px;
}
.caret {
  width: 0;
  height: 0;
  border: 5px solid transparent;
  border-top-color: #111;
  border-bottom: none;
}

/* menu */
.menubar {
  display: flex;
  align-items: center;
  height: 23px;
  padding: 0 2px 0 6px;
  border-top: 2px solid #4b424c;
  border-bottom: 1px solid #a39ba9;
  background: linear-gradient(#fff, #f4f2fd 35%, #dfdcf5 50%, #e4e0f6);
}
.app-icon {
  margin-right: 7px;
}
.menubar a {
  color: #111;
  text-decoration: none;
  margin-right: 15px;
}
.window-buttons {
  margin-left: auto;
}

/* toolbar */
.toolbar {
  display: flex;
  align-items: center;
  height: 33px;
  padding-left: 6px;
  border-bottom: 1px solid #a39ba9;
}
.tool {
  width: 23px;
  height: 28px;
}
.narrow {
  width: 22px;
}
.drop {
  width: 9px;
  height: 28px;
}
.drop::after {
  content: "";
  border: 4px solid transparent;
  border-top-color: #222;
  border-bottom: none;
}
.sep {
  width: 1px;
  height: 26px;
  margin: 0 3px;
  background-color: #918a97;
  flex-shrink: 0;
}
.sep-wide {
  margin-right: 6px;
}
.pair {
  display: flex;
  width: 42px;
  height: 28px;
  margin-right: 2px;
  flex-shrink: 0;
}
.pair button {
  width: 27px;
  height: 100%;
}
.pair .drop {
  width: 15px;
}
.pair.pressed .drop {
  border-left: 1px solid #6f6873;
}
.muted .drop::after {
  border-top-color: #908b93;
}

.infobar {
  display: flex;
  height: 44px;
  padding-bottom: 5px;
  border-bottom: 1px solid #a39ba9;
}
.grip-box {
  width: 14px;
  background-color: #94add7;
  display: flex;
  flex-direction: column;
  align-items: center;
  justify-content: space-between;
}
.grip-box i {
  width: 9px;
  height: 2px;
  margin-bottom: 3px;
  background-color: #000;
}
.close {
  font: bold 11px "DejaVu Sans", sans-serif;
  width: 14px;
  height: 14px;
}
.info-tools {
  display: flex;
  align-items: center;
  width: 163px;
  padding: 15px 0 0 6px;
  border-right: 1px solid #a39ba9;
  border-bottom: 1px solid #a39ba9;
}
.flyout {
  width: 33px;
  height: 24px;
}
.info-tools .flyout {
  width: 38px;
}
.flyout::after {
  content: "";
  align-self: flex-end;
  border: 3px solid transparent;
  border-left: 4px solid #000;
  border-right: none;
}
.flyout.muted::after {
  border-left-color: #908b93;
}
.blue-btn {
  width: 37px;
  height: 18px;
  border: 1px solid #34567c;
  border-radius: 3px;
  background: linear-gradient(#cbe4f6, #6eb0e0);
}

/* workspace */
.workspace {
  flex: 1;
  display: flex;
  min-height: 0;
}
.palette {
  width: 73px;
  padding-right: 6px;
  flex-shrink: 0;
}
.panel-title {
  display: flex;
  align-items: center;
  height: 14px;
  padding: 0 1px 0 2px;
  background-color: #94add7;
  font: bold 11px "DejaVu Sans", sans-serif;
}
.panel-title .close {
  margin-left: auto;
}
.palette-grid {
  display: grid;
  grid-template-columns: 32px 32px;
  grid-auto-rows: 24px;
  padding: 0 1px;
}
.palette-grid button {
  width: 32px;
  height: 24px;
}
.palette-grid .pressed {
  height: 22px;
  margin-top: 1px;
}
.palette-grid .glyph {
  color: #8a858d;
  font: bold 19px "Liberation Serif", serif;
}
.palette-grid .small {
  font-size: 12px;
}

.view {
  flex: 1;
  min-width: 0;
  display: flex;
  flex-direction: column;
  border-left: 1px solid #6d6670;
}
.scene {
  flex: 1;
  min-height: 0;
  background-color: #fff;
}
.view-nav {
  display: flex;
  height: 13px;
  padding-left: 1px;
  overflow: hidden;
  border-top: 1px solid #8f8894;
}
.view-nav button {
  width: 22px;
  height: 16px;
  margin-right: 2px;
  border: 1px solid #98919c;
  border-radius: 3px;
  background-color: #fbf5fc;
}
.view-nav .on {
  background: linear-gradient(#8cc0e5, #cbe4f6);
  border-color: #34567c;
}
.view-nav .arrow {
  border: none;
  background: none;
  height: 12px;
  margin: 0;
}
.view-nav .left {
  width: 16px;
}
.h-thumb {
  flex: 1;
  display: flex;
  align-items: center;
  justify-content: center;
  border: 1px solid #98919c;
  background: linear-gradient(#f6eef7, #c4bcc8);
}
.view-nav .h-thumb + .arrow {
  margin-right: 18px;
}
.arrow::after {
  content: "";
  border: 4px solid transparent;
  border-left: 5px solid #222;
  border-right: none;
}
.arrow.left::after {
  border-left: none;
  border-right: 5px solid #222;
}

/* dock */
.dock {
  width: 234px;
  flex-shrink: 0;
  border-left: 1px solid #a39ba9;
}
.dock .panel-title .caret {
  margin-left: auto;
}
.dock .panel-title .close {
  margin-left: 3px;
}
.cut {
  padding-left: 111px;
}
.tabs {
  display: flex;
  justify-content: flex-end;
  height: 31px;
  padding: 5px 1px 0 0;
}
.tabs button {
  width: 31px;
  height: 22px;
}
.tree-box {
  display: flex;
  height: 215px;
  background-color: #fff;
  border-top: 1px solid #a39ba9;
}
.tree {
  flex: 1;
  min-width: 0;
  margin: 0;
  padding: 0 0 0 112px;
  list-style: none;
  overflow: hidden;
  white-space: nowrap;
  font: 10px Roboto, sans-serif;
}
.tree li {
  height: 16px;
  line-height: 16px;
}
.tree .current {
  font: bold 11px/13px "Noto Sans", sans-serif;
  height: 15px;
  border-top: 1px solid #3a86b8;
  border-bottom: 1px solid #3a86b8;
}
.v-scroll {
  width: 18px;
  padding: 5px 2px;
  display: flex;
  flex-direction: column;
  align-items: center;
  background-color: #f3ebf5;
}
.up, .down {
  border: 4px solid transparent;
  border-bottom: 4px solid #444;
  border-top: none;
}
.down {
  margin-top: auto;
  border-bottom: none;
  border-top: 4px solid #444;
}
.v-thumb {
  display: flex;
  align-items: center;
  justify-content: center;
  width: 14px;
  height: 86px;
  margin-top: 48px;
  border: 1px solid #8f8894;
  background: linear-gradient(to right, #f6eef7, #c4bcc8);
}
.tree-hscroll {
  display: flex;
  justify-content: space-between;
  height: 19px;
  padding: 1px 22px 2px 0;
  border-bottom: 1px solid #8f8894;
}
.tree-hthumb {
  width: 132px;
  border: 1px solid #98919c;
  border-radius: 2px;
  background: linear-gradient(#f6eef7, #c4bcc8);
}
.dock-actions {
  display: flex;
  justify-content: flex-end;
  gap: 2px;
  padding: 8px 1px 6px;
}
.dock-actions button, .quad button {
  width: 21px;
  height: 21px;
  border: 1px solid #a9a2ad;
  border-radius: 3px;
}
.props-head {
  height: 24px;
  border-bottom: 1px solid #a39ba9;
  background-color: #fdf1fc;
}
.props-row {
  height: 19px;
  padding-left: 112px;
  font: 10px/18px Roboto, sans-serif;
  background-color: #fbf5fd;
}
.push {
  width: 100%;
  height: 22px;
  border: 1px solid #7f7984;
  border-radius: 3px;
  background: linear-gradient(#f6eff8, #e4dce7 50%, #c9c0cd);
  font: 11px "Liberation Sans", sans-serif;
}
.push:disabled {
  color: #8f8993;
  border-color: #aca4b1;
  background: #f7eefa;
}
.push.settings {
  width: 219px;
  margin: 2px 0 10px;
  justify-content: flex-start;
  padding-left: 110px;
}
.field-box {
  display: flex;
  justify-content: flex-end;
  height: 22px;
  margin: 7px 1px 5px 0;
  padding-right: 3px;
  border: 1px solid #aca4b1;
  border-radius: 3px;
}
.field-box .arrow::after, .slider-row .arrow::after {
  border-left-color: #77717b;
}
.quad {
  display: flex;
  justify-content: flex-end;
  gap: 2px;
  padding: 0 75px 4px 0;
  border-bottom: 1px solid #a39ba9;
}
.quad button {
  width: 31px;
  height: 22px;
}
.slider-row {
  display: flex;
  height: 34px;
  padding: 8px 0 0 60px;
}
.slider-row.first {
  height: 63px;
  padding-top: 24px;
}
.slider-row div {
  width: 151px;
}
.slider-row input {
  display: block;
  appearance: none;
  width: 100%;
  height: 14px;
  background: linear-gradient(#a39ba9, #a39ba9) center / 100% 1px no-repeat;
}
.slider-row input::-webkit-slider-thumb {
  appearance: none;
  width: 6px;
  height: 11px;
  border: 1px solid #a39ba9;
  border-radius: 1px 1px 3px 3px;
  background-color: #fbf5fd;
}
.slider-row .ticks {
  height: 3px;
  margin-top: 4px;
  background: repeating-linear-gradient(to left, #a39ba9 0, #a39ba9 1px, transparent 1px, transparent 13px);
}
.slider-row button {
  width: 12px;
  height: 22px;
  margin-left: 9px;
  border: 1px solid #a39ba9;
  border-radius: 2px;
}
.quad.last {
  border-top: 1px solid #a39ba9;
  border-bottom: none;
  padding-top: 5px;
}

/* status */
.status {
  display: flex;
  align-items: center;
  height: 28px;
  padding-left: 52px;
  font: 11px "Liberation Sans", sans-serif;
}
.status .sep {
  height: 26px;
}
.dots-grip {
  width: 3px;
  height: 24px;
  margin-right: 5px;
  border-left: 2px dotted #b3abb8;
}
.raised {
  height: 24px;
  border: 1px solid #6f6873;
  border-radius: 3px;
  background-color: #f1e8f3;
}
.w-22 {
  width: 23px;
  margin-right: 5px;
}
.w-24 {
  width: 24px;
  margin-right: 2px;
}
.delta {
  width: 12px;
  height: 24px;
  margin-right: 5px;
  border: 1px solid #34567c;
  border-radius: 2px;
  background: linear-gradient(#a9d1ec, #6eaedd);
  font-weight: bold;
}
.coords {
  display: grid;
  grid-template-columns: 27px 90px;
  font-weight: bold;
  line-height: 14px;
}
.coords label {
  white-space: nowrap;
  text-align: right;
  padding-right: 6px;
}
.coords input, .z-box input {
  min-width: 0;
  width: 100%;
  height: 13px;
  border: none;
  background-color: #fcf6fe;
  font-weight: bold;
}
.z-box {
  display: grid;
  grid-template-columns: 26px 87px 12px;
  width: 137px;
  line-height: 14px;
  font-weight: bold;
}
.z-box span {
  grid-column: 1 / 3;
  white-space: nowrap;
  font-size: 10px;
}
.z-box .arrow {
  grid-column: 3;
}
.z-box .arrow, .half .arrow {
  width: 12px;
  height: 12px;
  border: 1px solid #333;
  border-radius: 2px;
}
.blue-btn.tall {
  width: 29px;
  height: 24px;
}
.slim {
  width: 11px;
  height: 24px;
  margin: 0 6px 0 2px;
  border: 1px solid #8f8894;
  border-radius: 2px;
}
.flyout.wide {
  width: 35px;
}
.half {
  display: flex;
  justify-content: space-between;
  width: 80px;
  line-height: 13px;
  color: #77717b;
}
.half b {
  color: #111;
  font-size: 10px;
}
.half .arrow {
  margin-top: 2px;
}
.push.ok, .push.cancel {
  width: 52px;
  height: 20px;
  margin-left: 3px;
  font: 12px Roboto, sans-serif;
}
.push.cancel {
  width: 78px;
  margin-left: 8px;
}

/* floating dialog */
.dialog {
  position: absolute;
  top: 62px;
  right: 121px;
  width: 269px;
  padding: 0 5px 5px;
  border: 1px solid #2c2230;
  background: linear-gradient(#d6c3e4, #c5b0d3 30%, #a995b8 80%, #c5b0d3);
}
.dialog-title {
  display: flex;
  align-items: center;
  justify-content: space-between;
  height: 22px;
  padding: 0 1px;
}
.dialog-title span {
  padding-bottom: 2px;
}
.dialog-close {
  width: 17px;
  height: 16px;
  border: 1px solid #7c2d26;
  border-radius: 2px;
  background: linear-gradient(#e8a08c, #c8452c);
  color: #fff;
  font-size: 9px;
}
.dialog-body {
  padding: 3px 4px 4px;
  border: 1px solid #111;
  background-color: #f7ecfa;
  font: 11px "Liberation Sans", sans-serif;
}
.dialog-body h2 {
  display: flex;
  align-items: center;
  height: 17px;
  margin: 0;
  padding: 0 0 2px 7px;
  gap: 7px;
  background: linear-gradient(to right, #f7ecfa, #fdf7fe);
  font: bold 11px "Noto Sans", sans-serif;
}
.dialog-body p {
  margin: 0;
  padding-left: 4px;
  line-height: 13px;
}
.stored {
  display: flex;
  align-items: center;
  height: 40px;
  padding: 3px 16px 0 7px;
}
.count {
  width: 42px;
  padding: 0 0 4px 20px;
}
.what {
  flex: 1;
  padding: 0 20px 0 2px;
  line-height: 13px;
}
.stored button {
  width: 26px;
  height: 26px;
  border: 1px solid #7f7984;
  border-radius: 2px;
  background: linear-gradient(#fbf5fc, #ddd5e0);
}
.choose {
  display: block;
  padding: 4px 0 7px 9px;
  line-height: 13px;
}
.select-row {
  position: relative;
  height: 26px;
}
.select-row svg {
  position: absolute;
  left: 2px;
  top: 0;
  pointer-events: none;
}
.select-row select {
  appearance: none;
  width: 100%;
  height: 26px;
  padding-left: 38px;
  border: none;
  background: linear-gradient(#fdf8fe, #fdf8fe);
  font: 11px Roboto, sans-serif;
}
.select-row::after {
  content: "";
  position: absolute;
  right: 5px;
  top: 12px;
  border: 4px solid transparent;
  border-top-color: #111;
  border-bottom: none;
}
.dialog-body .surface {
  padding: 14px 0 6px 9px;
}
.radio {
  display: flex;
  align-items: center;
  gap: 4px;
  height: 20px;
  padding-left: 24px;
}
.radio input {
  appearance: none;
  width: 12px;
  height: 12px;
  border: 1px solid #8f8894;
  border-radius: 50%;
  background-color: #efe6f1;
}
.radio input:checked {
  border-color: #2c5670;
  background: radial-gradient(#17495f 3px, #d9eaf3 4px);
}
.push.primary {
  margin: 6px 0 4px;
  border: 2px solid #35b3cf;
  background: linear-gradient(#eef6fe, #d5eafb 50%, #b4dcf8);
}
.dialog-body .add {
  padding: 1px 0 4px 4px;
}
.stack {
  display: flex;
  flex-direction: column;
  gap: 8px;
}
.dialog-body hr {
  width: 100%;
  height: 1px;
  margin: 7px 0;
  border: none;
  background-color: #a39ba9;
}
.dialog-body p + .stack {
  margin-top: 2px;
}
.dialog-body p + .push {
  margin-top: 3px;
}
```
